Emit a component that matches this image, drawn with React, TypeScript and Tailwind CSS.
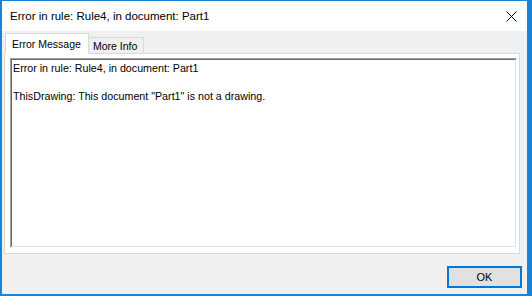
import React from "react";

const font = { fontFamily: '"Liberation Sans", Arial, sans-serif' };

export default function App() {
  return (
    <div
      className="w-[532px] h-[296px] flex flex-col bg-[#f0f0f0] border-t border-l-2 border-b-2 border-r-[5px] border-[#1883d7] overflow-hidden"
      style={font}
    >
      {/* Title bar */}
      <div className="h-[30px] shrink-0 bg-white flex items-center justify-between pl-[8px] pr-[10px]">
        <span className="text-[11.5px] text-black leading-none pt-[1px]">
          Error in rule: Rule4, in document: Part1
        </span>
        <svg width="11" height="11" viewBox="0 0 11 11" className="mt-[1px]">
          <path d="M0.5 0.5 L10.5 10.5 M10.5 0.5 L0.5 10.5" stroke="#000" strokeWidth="1" fill="none" />
        </svg>
      </div>

      {/* Body */}
      <div className="flex-1 flex flex-col pl-[2px]">
        {/* Tabs */}
        <div className="h-[22px] shrink-0 flex items-end pt-[2px] pl-[1px] relative z-10">
          <div className="h-[21px] w-[84px] bg-white border-t border-l border-r border-[#d9d9d9] text-[10.5px] text-black pl-[6px] pt-[3px] leading-[14px] -mb-[1px]">
            Error Message
          </div>
          <div className="h-[16px] w-[56px] bg-[#f0f0f0] border-t border-r border-l border-[#d9d9d9] text-[10.5px] text-black pl-[4px] pt-[1px] leading-[14px] -ml-[1px]">
            More Info
          </div>
        </div>

        {/* Panel */}
        <div className="h-[201px] w-[516px] shrink-0 bg-white border border-[#d9d9d9] pl-[5px] pt-[4px]">
          <div className="w-[507px] h-[190px] border border-t-[#a0a0a0] border-l-[#a0a0a0] border-b-[#ffffff] border-r-[#ffffff]">
            <div className="w-full h-full border border-t-[#696969] border-l-[#696969] border-b-[#e3e3e3] border-r-[#e3e3e3] bg-white pl-[1px] pt-[1px] text-[10.7px] leading-[14px] text-black">
              <div>Error in rule: Rule4, in document: Part1</div>
              <div>&nbsp;</div>
              <div>ThisDrawing: This document "Part1" is not a drawing.</div>
            </div>
          </div>
        </div>

        {/* Footer */}
        <div className="flex-1 flex justify-end items-start pt-[12px] pr-[5px]">
          <button className="w-[75px] h-[22px] border-2 border-[#0078d7] bg-[#e1e1e1] text-[11px] text-black leading-none flex items-center justify-center">
            OK
          </button>
        </div>
      </div>
    </div>
  );
}
